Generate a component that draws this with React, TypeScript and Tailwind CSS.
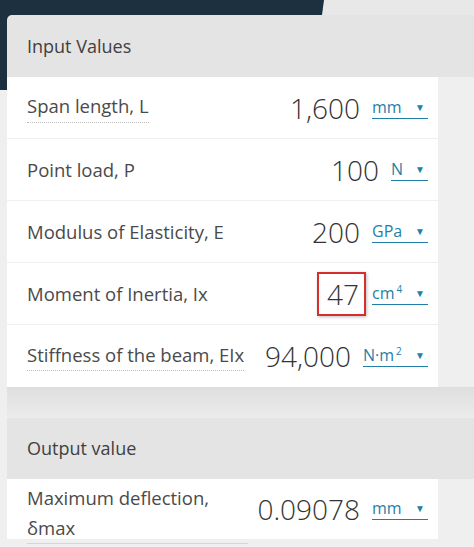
import React from "react";

const font = { fontFamily: '"Open Sans", "Noto Sans", sans-serif' };

type Row = {
  label: React.ReactNode;
  value: string;
  unit: React.ReactNode;
  unitW: string;
  underline?: boolean;
  boxed?: boolean;
};

const rows: Row[] = [
  { label: "Span length, L", value: "1,600", unit: "mm", unitW: "w-[56px]", underline: true },
  { label: "Point load, P", value: "100", unit: "N", unitW: "w-[37px]" },
  { label: "Modulus of Elasticity, E", value: "200", unit: "GPa", unitW: "w-[56px]" },
  {
    label: "Moment of Inertia, Ix",
    value: "47",
    unit: (
      <span>
        cm<span className="relative -top-[6px] text-[10px] leading-none ml-[2px]">4</span>
      </span>
    ),
    unitW: "w-[56px]",
    boxed: true,
  },
  {
    label: "Stiffness of the beam, EIx",
    value: "94,000",
    unit: (
      <span>
        N·m<span className="relative -top-[6px] text-[10px] leading-none ml-[2px]">2</span>
      </span>
    ),
    unitW: "w-[65px]",
    underline: true,
  },
];

function Unit({ children, w }: { children: React.ReactNode; w: string }) {
  return (
    <div
      className={`${w} flex items-center justify-between border-b border-[#1f7fa6] text-[16px] leading-[20px] text-[#1f7fa6] pb-[1px]`}
    >
      <span>{children}</span>
      <span className="text-[10px] mr-[3px]">▼</span>
    </div>
  );
}

function Value({ v, boxed }: { v: string; boxed?: boolean }) {
  return (
    <div
      className={
        boxed
          ? "border-2 border-[#d32f2f] shadow-[1px_1px_3px_rgba(0,0,0,0.25)] pl-[8px] pr-[5px] h-[44px] flex items-center text-[28px] font-[350] text-[#333]"
          : "px-[6px] text-[28px] font-[350] text-[#333]"
      }
    >
      {v}
    </div>
  );
}

export default function App() {
  return (
    <div
      className="relative w-[474px] h-[547px] overflow-hidden bg-[#efefef]"
      style={font}
    >
      <div className="absolute left-0 top-0 w-[474px] h-[15px] bg-[#e8e8e8]" />
      <div className="absolute left-0 top-0 w-[324px] h-[90px] bg-[#1c303f] [clip-path:polygon(0_0,324px_0,312px_90px,0_90px)]" />
      <div className="relative flex flex-col pl-[7px] pt-[15px]">
        {/* Input card */}
        <div className="flex flex-col">
          <div className="h-[62px] bg-[#e4e4e4] rounded-tl-[5px] flex items-center pl-[20px] text-[18px] text-[#404040]">
            Input Values
          </div>
          <div className="w-[431px] bg-white flex flex-col">
            {rows.map((r, i) => (
              <div
                key={i}
                className={`h-[62px] flex items-center pl-[20px] pr-[10px] ${
                  i < rows.length - 1 ? "border-b border-[#efefef]" : ""
                }`}
              >
                <div
                  className={`text-[18.5px] text-[#4a4a4a] ${
                    r.underline ? "border-b border-dotted border-[#bdbdbd] pb-[2px]" : ""
                  }`}
                >
                  {r.label}
                </div>
                <div className="ml-auto flex items-center gap-[6px]">
                  <Value v={r.value} boxed={r.boxed} />
                  <Unit w={r.unitW}>{r.unit}</Unit>
                </div>
              </div>
            ))}
          </div>
        </div>
        <div className="h-[31px] bg-gradient-to-b from-[#dedede] to-[#ececec]" />
        {/* Output card */}
        <div className="flex flex-col">
          <div className="h-[61px] bg-[#e4e4e4] flex items-center pl-[20px] text-[18px] text-[#404040]">
            Output value
          </div>
          <div className="w-[431px] h-[60px] bg-white flex items-center pl-[20px] pr-[10px]">
            <div className="mt-[8px] text-[18.5px] leading-[30px] text-[#4a4a4a] border-b border-[#d6d6d6] w-[221px]">
              Maximum deflection,
              <br />
              δmax
            </div>
            <div className="ml-auto flex items-center gap-[6px]">
              <Value v="0.09078" />
              <Unit w="w-[56px]">mm</Unit>
            </div>
          </div>
        </div>
      </div>
    </div>
  );
}
